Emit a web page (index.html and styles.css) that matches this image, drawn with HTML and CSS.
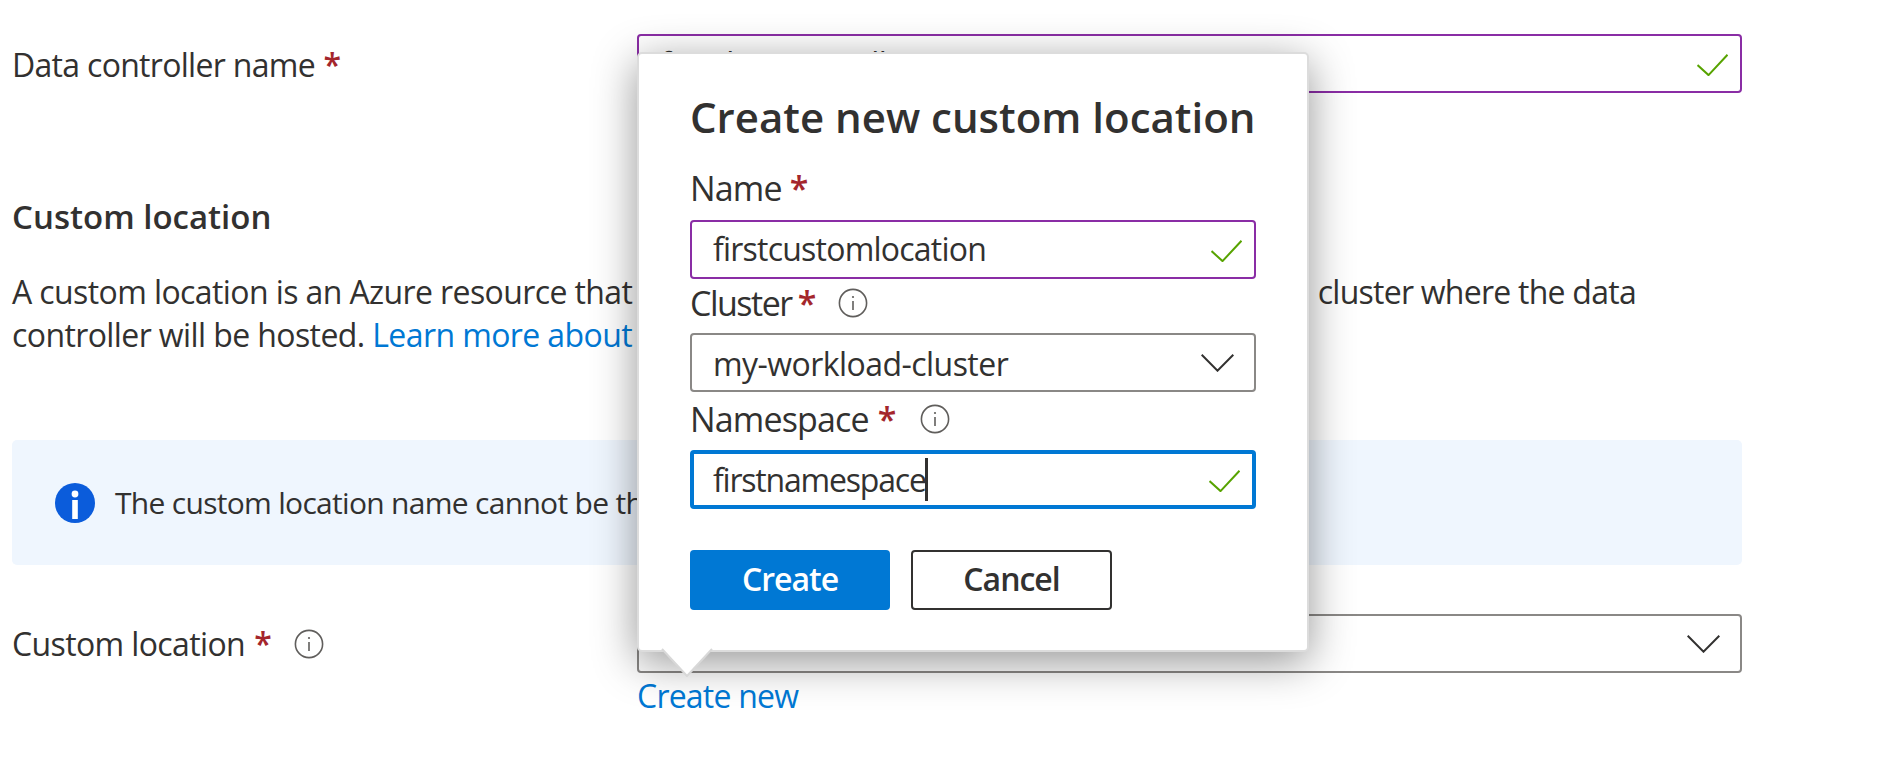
FILE: index.html
```html
<!DOCTYPE html>
<html lang="en">
<head>
<meta charset="utf-8">
<title>Create new custom location</title>
<link rel="stylesheet" href="styles.css">
</head>
<body>
<main class="page">
  <div class="row row-first">
    <label class="label">Data controller name <span class="req">*</span></label>
    <div class="field field-valid">
      <span class="value">firstdatacontroller</span>
      <svg class="check" viewBox="0 0 31 22"><polyline points="0.5,11 11.5,21 30.5,0.7"/></svg>
    </div>
  </div>

  <h2 class="section-title">Custom location</h2>
  <p class="desc">A custom location is an Azure resource that <span class="masked masked-a">maps to the namespace in the Kubernetes</span> <span class="tail">cluster where the data</span><br>controller will be hosted. <a class="link" href="#">Learn more about custom locations</a></p>

  <div class="banner">
    <svg class="banner-icon" viewBox="0 0 40 40"><circle cx="20" cy="20" r="20"/><circle class="i-mark" cx="20" cy="11" r="3.4"/><rect class="i-mark" x="17.2" y="17" width="5.6" height="19"/></svg>
    <span class="banner-text">The custom location name cannot be the same as the data controller name.</span>
  </div>

  <div class="row row-location">
    <label class="label label-with-info">Custom location <span class="req">*</span>
      <svg class="info" viewBox="0 0 30 30"><circle cx="15" cy="15" r="13.6"/><line x1="15" y1="13" x2="15" y2="22"/><circle class="dot" cx="15" cy="9" r="1.1"/></svg>
    </label>
    <div class="field-stack">
      <div class="field field-select">
        <svg class="chevron" viewBox="0 0 33 18"><polyline points="0.7,0.7 16.5,16.7 32.3,0.7"/></svg>
      </div>
      <a class="link create-link" href="#">Create new</a>
    </div>
  </div>

  <section class="popup">
    <h1 class="popup-title">Create new custom location</h1>

    <label class="label popup-label">Name <span class="req">*</span></label>
    <div class="field field-valid field-name">
      <span class="value">firstcustomlocation</span>
      <svg class="check" viewBox="0 0 31 22"><polyline points="0.5,11 11.5,21 30.5,0.7"/></svg>
    </div>

    <label class="label popup-label popup-label-cluster label-with-info">Cluster <span class="req">*</span>
      <svg class="info" viewBox="0 0 30 30"><circle cx="15" cy="15" r="13.6"/><line x1="15" y1="13" x2="15" y2="22"/><circle class="dot" cx="15" cy="9" r="1.1"/></svg>
    </label>
    <div class="field field-select field-cluster">
      <span class="value value-cluster">my-workload-cluster</span>
      <svg class="chevron" viewBox="0 0 33 18"><polyline points="0.7,0.7 16.5,16.7 32.3,0.7"/></svg>
    </div>

    <label class="label popup-label popup-label-ns label-with-info">Namespace <span class="req">*</span>
      <svg class="info" viewBox="0 0 30 30"><circle cx="15" cy="15" r="13.6"/><line x1="15" y1="13" x2="15" y2="22"/><circle class="dot" cx="15" cy="9" r="1.1"/></svg>
    </label>
    <div class="field field-focus">
      <span class="value value-ns">firstnamespace</span><span class="caret"></span>
      <svg class="check" viewBox="0 0 31 22"><polyline points="0.5,11 11.5,21 30.5,0.7"/></svg>
    </div>

    <div class="actions">
      <button class="btn btn-primary" type="button">Create</button>
      <button class="btn btn-default" type="button">Cancel</button>
    </div>

    <svg class="beak" viewBox="0 0 52 29"><polyline points="1,1 26,28 51,1"/></svg>
  </section>
</main>
</body>
</html>
```
FILE: styles.css
```css
* { box-sizing: border-box; }
html, body { margin: 0; padding: 0; background: #fff; }
body {
  width: 1885px;
  height: 757px;
  overflow: hidden;
  font-family: "Open Sans", "Noto Sans", "Liberation Sans", sans-serif;
  color: #323130;
  font-size: 32px;
}
.page {
  position: relative;
  width: 1742px;
  padding: 34px 0 0 12px;
}
.row {
  display: grid;
  grid-template-columns: 625px 1fr;
}
.label {
  display: block;
  font-size: 32px;
  line-height: 42px;
  letter-spacing: -0.7px;
  white-space: nowrap;
}
.row-first .label { padding-top: 10px; }
.row-first .req { margin-left: 1px; }
.row-location .label { height: 42px; margin-top: 9px; letter-spacing: -0.62px; }
.req { color: #a4262c; font-weight: 600; }
.field {
  position: relative;
  display: flex;
  align-items: center;
  height: 59px;
  padding-left: 21px;
  border: 2px solid #8a8886;
  border-radius: 4px;
  background: #fff;
}
.value {
  font-size: 32px;
  letter-spacing: -0.78px;
  line-height: 42px;
  white-space: nowrap;
}
.value-ns { letter-spacing: -1.2px; }
.value-cluster { letter-spacing: -0.55px; }
.field-valid { border-color: #8a2da5; }
.field-select { border-color: #8a8886; }
.field-focus { border: 4px solid #0078d4; padding-left: 19px; }
.field-name { padding-bottom: 2px; }
.field-cluster { padding-top: 2px; }
.check {
  position: absolute;
  right: 12px;
  top: 50%;
  width: 31px;
  height: 22px;
  transform: translateY(-45%);
  fill: none;
  stroke: #57a300;
  stroke-width: 2;
}
.chevron {
  position: absolute;
  right: 20px;
  top: 19px;
  width: 33px;
  height: 18px;
  fill: none;
  stroke: #323130;
  stroke-width: 2;
}
.section-title {
  margin: 102px 0 0;
  font-size: 33px;
  line-height: 44px;
  font-weight: 600;
  letter-spacing: 0;
}
.desc {
  margin: 31px 0 0;
  font-size: 32px;
  line-height: 43px;
  letter-spacing: -0.6px;
  white-space: nowrap;
}
.masked {
  display: inline-block;
  vertical-align: bottom;
  overflow: hidden;
  white-space: nowrap;
}
.masked-a { width: 670px; }
.tail { letter-spacing: -0.75px; }
.link { color: #0078d4; text-decoration: none; }
.banner {
  display: flex;
  align-items: center;
  gap: 20px;
  height: 125px;
  margin-top: 84px;
  padding-left: 43px;
  background: #eff6fe;
  border-radius: 5px;
}
.banner-icon { width: 40px; height: 40px; flex: none; fill: #0b5cdb; }
.banner-icon .i-mark { fill: #fff; }
.banner-text {
  font-size: 30px;
  letter-spacing: -0.7px;
  white-space: nowrap;
}
.row-location { margin-top: 49px; }
.label-with-info { display: flex; align-items: center; }
.label-with-info .req { margin-left: 9px; }
.info {
  width: 30px;
  height: 30px;
  margin-left: 23px;
  flex: none;
  fill: none;
  stroke: #605e5c;
  stroke-width: 1.6;
}
.info .dot { fill: #605e5c; stroke: none; }
.create-link {
  display: block;
  margin-top: 2px;
  font-size: 32px;
  line-height: 42px;
  letter-spacing: -0.78px;
}

/* callout over the form */
.popup {
  position: absolute;
  left: 637px;
  top: 52px;
  width: 672px;
  height: 600px;
  padding: 33px 51px 0 51px;
  background: #fff;
  border: 2px solid #dcdcdc;
  border-radius: 5px;
  box-shadow: 0 10px 44px rgba(0, 0, 0, 0.42);
}
.popup-title {
  margin: 0 0 19px;
  font-size: 42px;
  line-height: 60px;
  font-weight: 600;
  letter-spacing: 0;
  white-space: nowrap;
}
.popup-label {
  height: 44px;
  line-height: 44px;
  margin-bottom: 10px;
  font-size: 34px;
  letter-spacing: -0.85px;
}
.popup-label-cluster { margin-top: 2px; margin-bottom: 8px; letter-spacing: -1.5px; }
.popup-label-cluster .req { margin-left: 6px; }
.popup-label-ns { margin-top: 5px; margin-bottom: 9px; }
.popup-label-ns .info { margin-left: 25px; }
.caret {
  width: 3px;
  height: 43px;
  background: #323130;
  margin-left: -1px;
}
.actions {
  display: flex;
  gap: 21px;
  margin: 41px 0 0;
}
.btn {
  height: 60px;
  padding: 0 0 3px;
  border-radius: 4px;
  font-family: inherit;
  font-size: 32px;
  font-weight: 600;
  letter-spacing: -1px;
}
.btn-primary {
  width: 200px;
  color: #fff;
  background: #0078d4;
  border: none;
}
.btn-default {
  width: 201px;
  color: #323130;
  background: #fff;
  border: 2px solid #323130;
}
.beak {
  position: absolute;
  left: 22px;
  top: 594px;
  width: 52px;
  height: 29px;
  fill: #fff;
  stroke: #d8d8d8;
  stroke-width: 2;
}
```
